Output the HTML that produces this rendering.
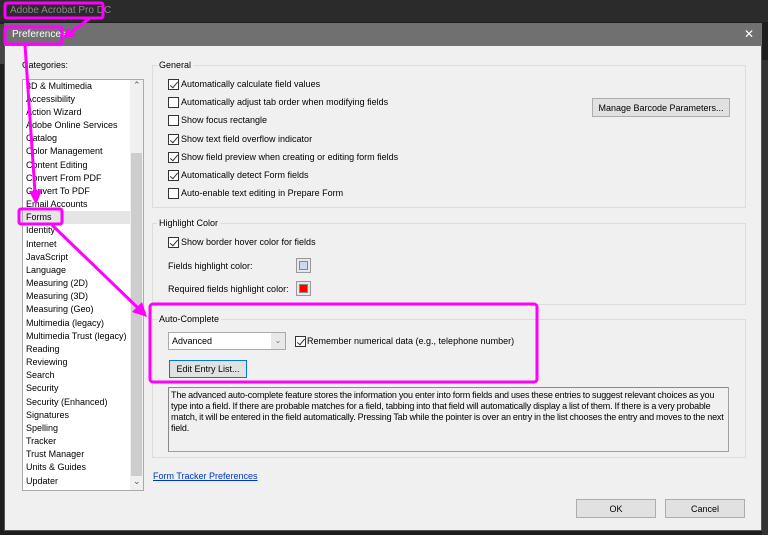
<!DOCTYPE html>
<html><head><style>
*{margin:0;padding:0;box-sizing:border-box}
body{width:768px;height:535px;background:#1e1e1e;font-family:"Liberation Sans",sans-serif;font-size:9px;color:#000;position:relative;overflow:hidden}
.a{position:absolute;white-space:nowrap}
.top{left:0;top:0;width:768px;height:22px;background:#2b2b2b}
.dlg{left:4px;top:23px;width:758px;height:508px;background:#f0f0f0;border:1px solid #555}
.tb{left:4px;top:23px;width:758px;height:23px;background:#707070;color:#fff}
.grp{position:absolute;border:1px solid #dcdcdc}
.cb{position:absolute;width:11px;height:11px;border:1px solid #333;background:#fff}
.cb.c::after{content:"";position:absolute;left:3px;top:0px;width:3px;height:7px;border:solid #333;border-width:0 1px 1px 0;transform:rotate(40deg)}
.btn{position:absolute;background:#e1e1e1;border:1px solid #adadad;text-align:center}
.li{position:absolute;left:26px}
</style></head><body>
<div class="a top"></div>
<div class="a" style="left:10px;top:5px;color:#8a8a8a;font-size:10px">Adobe Acrobat Pro DC</div>
<div class="a" style="left:0;top:24px;width:4px;height:40px;background:#444"></div>
<div class="a" style="left:762px;top:60px;width:6px;height:475px;background:#333"></div>
<div class="a dlg"></div>
<div class="a tb"><span style="position:absolute;left:8px;top:6px;font-size:10px">Preferences</span><span style="position:absolute;right:8px;top:4px;font-size:12px;font-weight:normal">✕</span></div>
<div class="a" style="left:22px;top:60px">Categories:</div>
<div class="a" style="left:22px;top:79px;width:122px;height:412px;background:#fff;border:1px solid #aaa"></div>
<div class="a" style="left:130px;top:80px;width:13px;height:410px;background:#f0f0f0"></div>
<div class="a" style="left:131px;top:153px;width:11px;height:323px;background:#cdcdcd"></div>
<div class="a" style="left:133px;top:80px;font-size:9px;color:#555">&#8963;</div>
<div class="a" style="left:133px;top:476px;font-size:9px;color:#555">&#8964;</div>
<div class="a" style="left:23px;top:211px;width:107px;height:13px;background:#e5e5e5"></div>
<div class="a" style="left:0;top:0">
<div class="li" style="top:81px">3D &amp; Multimedia</div>
<div class="li" style="top:94px">Accessibility</div>
<div class="li" style="top:107px">Action Wizard</div>
<div class="li" style="top:120px">Adobe Online Services</div>
<div class="li" style="top:133px">Catalog</div>
<div class="li" style="top:146px">Color Management</div>
<div class="li" style="top:160px">Content Editing</div>
<div class="li" style="top:173px">Convert From PDF</div>
<div class="li" style="top:186px">Convert To PDF</div>
<div class="li" style="top:199px">Email Accounts</div>
<div class="li" style="top:212px">Forms</div>
<div class="li" style="top:225px">Identity</div>
<div class="li" style="top:239px">Internet</div>
<div class="li" style="top:252px">JavaScript</div>
<div class="li" style="top:265px">Language</div>
<div class="li" style="top:278px">Measuring (2D)</div>
<div class="li" style="top:291px">Measuring (3D)</div>
<div class="li" style="top:304px">Measuring (Geo)</div>
<div class="li" style="top:318px">Multimedia (legacy)</div>
<div class="li" style="top:331px">Multimedia Trust (legacy)</div>
<div class="li" style="top:344px">Reading</div>
<div class="li" style="top:357px">Reviewing</div>
<div class="li" style="top:370px">Search</div>
<div class="li" style="top:383px">Security</div>
<div class="li" style="top:397px">Security (Enhanced)</div>
<div class="li" style="top:410px">Signatures</div>
<div class="li" style="top:423px">Spelling</div>
<div class="li" style="top:436px">Tracker</div>
<div class="li" style="top:449px">Trust Manager</div>
<div class="li" style="top:462px">Units &amp; Guides</div>
<div class="li" style="top:476px">Updater</div>
</div>

<div class="grp" style="left:152px;top:65px;width:594px;height:143px"></div>
<div class="a" style="left:157px;top:60px;background:#f0f0f0;padding:0 2px">General</div>
<div class="cb c" style="left:168px;top:79px"></div><div class="a" style="left:181px;top:79px">Automatically calculate field values</div>
<div class="cb" style="left:168px;top:97px"></div><div class="a" style="left:181px;top:97px">Automatically adjust tab order when modifying fields</div>
<div class="cb" style="left:168px;top:115px"></div><div class="a" style="left:181px;top:115px">Show focus rectangle</div>
<div class="cb c" style="left:168px;top:134px"></div><div class="a" style="left:181px;top:134px">Show text field overflow indicator</div>
<div class="cb c" style="left:168px;top:152px"></div><div class="a" style="left:181px;top:152px">Show field preview when creating or editing form fields</div>
<div class="cb c" style="left:168px;top:170px"></div><div class="a" style="left:181px;top:170px">Automatically detect Form fields</div>
<div class="cb" style="left:168px;top:188px"></div><div class="a" style="left:181px;top:188px">Auto-enable text editing in Prepare Form</div>
<div class="btn" style="left:592px;top:98px;width:138px;height:19px;padding-top:4px">Manage Barcode Parameters...</div>

<div class="grp" style="left:152px;top:223px;width:594px;height:82px"></div>
<div class="a" style="left:157px;top:218px;background:#f0f0f0;padding:0 2px">Highlight Color</div>
<div class="cb c" style="left:168px;top:237px"></div><div class="a" style="left:181px;top:237px">Show border hover color for fields</div>
<div class="a" style="left:168px;top:261px">Fields highlight color:</div>
<div class="a" style="left:296px;top:258px;width:15px;height:15px;border:1px solid #999;background:#e8e8e8"><div style="margin:2px;width:9px;height:9px;background:#cdd8f5;border:1px solid #888"></div></div>
<div class="a" style="left:168px;top:284px">Required fields highlight color:</div>
<div class="a" style="left:296px;top:281px;width:15px;height:15px;border:1px solid #999;background:#e8e8e8"><div style="margin:2px;width:9px;height:9px;background:#f00;border:1px solid #888"></div></div>

<div class="grp" style="left:152px;top:319px;width:594px;height:139px"></div>
<div class="a" style="left:157px;top:314px;background:#f0f0f0;padding:0 2px">Auto-Complete</div>
<div class="a" style="left:168px;top:332px;width:118px;height:18px;background:#fff;border:1px solid #aaa"><span style="position:absolute;left:3px;top:3px">Advanced</span><span style="position:absolute;right:0;top:0;width:14px;height:16px;background:#e8e8e8;color:#777;text-align:center;font-size:8px;line-height:16px">&#8964;</span></div>
<div class="cb c" style="left:295px;top:336px"></div><div class="a" style="left:307px;top:336px">Remember numerical data (e.g., telephone number)</div>
<div class="btn" style="left:169px;top:360px;width:78px;height:18px;border-color:#0078d7;padding-top:3px">Edit Entry List...</div>
<div class="a" style="left:168px;top:387px;width:561px;height:65px;border:1px solid #a0a0a0;border-top-color:#888;border-left-color:#888;white-space:normal;padding:2px 2px;line-height:11px;letter-spacing:-0.15px;word-spacing:-0.3px">The advanced auto-complete feature stores the information you enter into form fields and uses these entries to suggest relevant choices as you type into a field. If there are probable matches for a field, tabbing into that field will automatically display a list of them. If there is a very probable match, it will be entered in the field automatically. Pressing Tab while the pointer is over an entry in the list chooses the entry and moves to the next field.</div>
<div class="a" style="left:153px;top:471px;color:#0033cc;text-decoration:underline">Form Tracker Preferences</div>
<div class="btn" style="left:576px;top:499px;width:80px;height:19px;padding-top:4px">OK</div>
<div class="btn" style="left:665px;top:499px;width:80px;height:19px;padding-top:4px">Cancel</div>

<svg class="a" style="left:0;top:0" width="768" height="535">
<g fill="none" stroke="#f0f" stroke-width="3">
<rect x="5" y="3" width="98" height="15" rx="2"/>
<rect x="5" y="27" width="57" height="17" rx="2"/>
<rect x="19" y="209" width="43" height="15" rx="2"/>
<rect x="150" y="304" width="387" height="78" rx="3"/>
<line x1="90" y1="18" x2="70" y2="33"/>
<line x1="25" y1="45" x2="35" y2="192"/>
<line x1="52" y1="225" x2="138" y2="308"/>
</g>
<g fill="#f0f">
<polygon points="63,38 68,28 76,36"/>
<polygon points="36,205 29,191 42,190"/>
<polygon points="147,317 132,312 142,302"/>
</g>
</svg>
</body></html>
